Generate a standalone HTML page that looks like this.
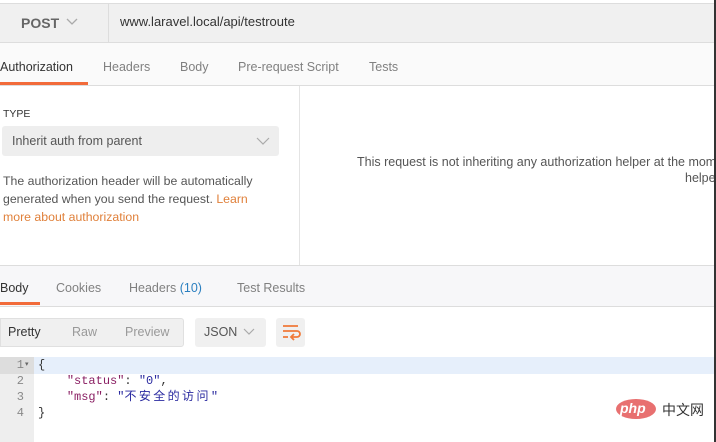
<!DOCTYPE html><html><head><style>
body{margin:0;width:716px;height:442px;overflow:hidden;background:#fff;font-family:"Liberation Sans",sans-serif;position:relative}
.a{position:absolute}
.t{font-size:12.5px;color:#808080}
</style></head><body>
<div class="a" style="left:0;top:0;width:716px;height:3px;background:#fff"></div>
<div class="a" style="left:0;top:3px;width:716px;height:40px;background:#f0f0f0;border-top:1px solid #ddd;border-bottom:1px solid #ddd;box-sizing:border-box"></div>
<div class="a" style="left:108px;top:4px;width:1px;height:38px;background:#ddd"></div>
<div class="a" style="left:21px;top:15px;font-size:14px;font-weight:bold;color:#666">POST</div>
<svg class="a" style="left:66px;top:18px" width="12" height="8"><path d="M1 1l5 5 5-5" stroke="#aaa" stroke-width="1.3" fill="none"/></svg>
<div class="a" style="left:120px;top:14px;font-size:13px;color:#333">www.laravel.local/api/testroute</div>
<div class="a" style="left:0;top:43px;width:716px;height:43px;background:#fafafa;border-bottom:1px solid #ddd;box-sizing:border-box"></div>
<div class="a" style="left:0;top:82px;width:88px;height:3px;background:#f26b3a"></div>
<div class="a" style="left:0;top:60px;font-size:12.5px;color:#333">Authorization</div>
<div class="a t" style="left:103px;top:60px">Headers</div>
<div class="a t" style="left:180px;top:60px">Body</div>
<div class="a t" style="left:238px;top:60px">Pre-request Script</div>
<div class="a t" style="left:369px;top:60px">Tests</div>
<div class="a" style="left:299px;top:86px;width:1px;height:179px;background:#e4e4e4"></div>
<div class="a" style="left:3px;top:108px;font-size:10.5px;color:#333">TYPE</div>
<div class="a" style="left:2px;top:126px;width:277px;height:30px;background:#eee;border-radius:3px"></div>
<div class="a" style="left:12px;top:134px;font-size:12.5px;color:#555">Inherit auth from parent</div>
<svg class="a" style="left:256px;top:137px" width="14" height="8"><path d="M1 1l6 6 6-6" stroke="#aaa" stroke-width="1.2" fill="none"/></svg>
<div class="a" style="left:3px;top:172px;font-size:12.3px;line-height:18px;color:#555;width:262px">The authorization header will be automatically generated when you send the request. <span style="color:#e0803a">Learn more about authorization</span></div>
<div class="a" style="left:357px;top:153px;font-size:12.5px;line-height:18px;color:#555;white-space:nowrap">This request is not inheriting any authorization helper at the moment</div>
<div class="a" style="left:685px;top:171px;font-size:12.5px;color:#555">helper</div>
<div class="a" style="left:0;top:265px;width:716px;height:42px;background:#f7f7f9;border-top:1px solid #ddd;border-bottom:1px solid #ddd;box-sizing:border-box"></div>
<div class="a" style="left:0;top:302px;width:40px;height:3px;background:#f26b3a"></div>
<div class="a" style="left:0;top:281px;font-size:12.5px;color:#333">Body</div>
<div class="a t" style="left:56px;top:281px">Cookies</div>
<div class="a t" style="left:129px;top:281px">Headers <span style="color:#2a7fc0">(10)</span></div>
<div class="a t" style="left:237px;top:281px">Test Results</div>
<div class="a" style="left:0;top:318px;width:184px;height:29px;background:#f0f0f0;border:1px solid #e0e0e0;box-sizing:border-box;border-radius:0 3px 3px 0"></div>
<div class="a" style="left:8px;top:325px;font-size:12.5px;color:#333">Pretty</div>
<div class="a t" style="left:72px;top:325px;color:#999">Raw</div>
<div class="a t" style="left:125px;top:325px;color:#999">Preview</div>
<div class="a" style="left:195px;top:318px;width:71px;height:29px;background:#f0f0f0;border-radius:3px"></div>
<div class="a" style="left:204px;top:325px;font-size:12.5px;color:#555">JSON</div>
<svg class="a" style="left:243px;top:328px" width="12" height="8"><path d="M1 1l5 5 5-5" stroke="#aaa" stroke-width="1.2" fill="none"/></svg>
<div class="a" style="left:276px;top:318px;width:29px;height:29px;background:#f0f0f0;border-radius:3px"></div>
<svg class="a" style="left:281px;top:323px" width="20" height="20"><path d="M2 3h15M2 8h14a3 3 0 0 1 0 6h-5M2 14h5M13 11l-3 3 3 3" stroke="#f07a3a" stroke-width="1.8" fill="none"/></svg>
<div class="a" style="left:0;top:357px;width:34px;height:85px;background:#eee"></div>
<div class="a" style="left:34px;top:357px;width:682px;height:17px;background:#e6effb"></div>
<div class="a" style="left:0;top:357px;width:34px;height:17px;background:#ddd"></div>
<div class="a" style="left:0;top:357px;font-family:'Liberation Mono','Noto Sans CJK SC',monospace;font-size:12px;line-height:16px;color:#888;width:24px;text-align:right">1<br>2<br>3<br>4</div>
<div class="a" style="left:25px;top:360px;font-size:7px;color:#666">▾</div>
<div class="a" style="left:38px;top:357px;font-family:'Liberation Mono','Noto Sans CJK SC',monospace;font-size:12px;line-height:16px;color:#333;white-space:pre">{
    <span style="color:#8a1f63">"status"</span>: <span style="color:#2a2aa0">"0"</span>,
    <span style="color:#8a1f63">"msg"</span>: <span style="color:#2a2aa0">"<span style="letter-spacing:2.4px">不安全的访问</span>"</span>
}</div>
<div class="a" style="left:616px;top:399px;width:40px;height:20px;border-radius:50%;background:#e87070"></div>
<div class="a" style="left:620px;top:400px;font-size:14px;font-style:italic;color:#fff;font-weight:bold">php</div>
<div class="a" style="left:662px;top:400px;font-size:14px;color:#333;font-family:'Noto Sans CJK SC',sans-serif">中文网</div>
<div class="a" style="left:714px;top:0;width:2px;height:442px;background:#333"></div>
</body></html>
